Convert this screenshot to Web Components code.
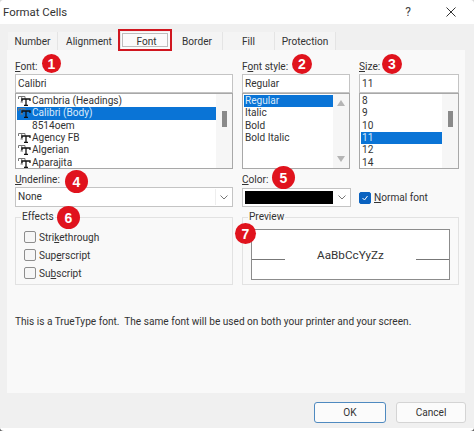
<!DOCTYPE html>
<html>
<head>
<meta charset="utf-8">
<title>Format Cells</title>
<style>
html { background: linear-gradient(#d8d8d8 50%, #666 50%); }
html, body { height: 431px; margin: 0; overflow: hidden; padding: 0; }
body { color: #333; font-family: Roboto, "Open Sans", sans-serif; font-size: 10.1px; }
</style>
</head>
<body>
<fc-dialog heading="Format Cells">
    <fc-tabs slot="tabs" active="Font"></fc-tabs>

    <fc-field label="&lt;u&gt;F&lt;/u&gt;ont:" badge="1" badge-x="27" badge-y="4" badge-size="19">
        <fc-input value="Calibri"></fc-input>
        <fc-list rows="Cambria (Headings),Calibri (Body),8514oem,Agency FB,Algerian,Aparajita" selected="1" icons="0,1,3,4,5" bar="thumb"></fc-list>
    </fc-field>
    <fc-field label="F&lt;u&gt;o&lt;/u&gt;nt style:" badge="2" badge-x="50" badge-y="4" badge-size="20">
        <fc-input value="Regular"></fc-input>
        <fc-list rows="Regular,Italic,Bold,Bold Italic" selected="0" bar="arrows"></fc-list>
    </fc-field>
    <fc-field label="&lt;u&gt;S&lt;/u&gt;ize:" badge="3" badge-x="23" badge-y="4" badge-size="20">
        <fc-input value="11"></fc-input>
        <fc-list rows="8,9,10,11,12,14" selected="3" bar="thumb"></fc-list>
    </fc-field>

    <fc-field class="low" label="&lt;u&gt;U&lt;/u&gt;nderline:" badge="4" badge-x="50" badge-y="1" badge-size="23">
        <fc-combo value="None"></fc-combo>
    </fc-field>
    <fc-field class="low wide" label="&lt;u&gt;C&lt;/u&gt;olor:" badge="5" badge-x="30" badge-y="-3" badge-size="23">
        <div style="align-items:center;display:flex;margin-top:1px">
            <fc-combo swatch style="height:19px;width:109px"></fc-combo>
            <fc-check checked style="margin-left:8px" label="&lt;u&gt;N&lt;/u&gt;ormal font"></fc-check>
        </div>
    </fc-field>

    <fc-group heading="Effects" badge="6">
        <fc-check label="Stri&lt;u&gt;k&lt;/u&gt;ethrough"></fc-check>
        <fc-check label="Sup&lt;u&gt;e&lt;/u&gt;rscript"></fc-check>
        <fc-check label="Su&lt;u&gt;b&lt;/u&gt;script"></fc-check>
    </fc-group>
    <fc-group class="wide" heading="Preview">
        <fc-preview sample="AaBbCcYyZz"></fc-preview>
    </fc-group>

    <p slot="note">This is a TrueType font.&nbsp; The same font will be used on both your printer and your screen.</p>

    <fc-button slot="footer" primary style="width:72px">OK</fc-button>
    <fc-button slot="footer" style="width:70px">Cancel</fc-button>
</fc-dialog>

<script>
const badgeCss = `
.badge {
    align-items: center;
    background: #e0131d;
    border-radius: 50%;
    color: #fff;
    display: flex;
    font: bold 14px "Liberation Sans", sans-serif;
    justify-content: center;
    position: absolute;
}`;

class FcDialog extends HTMLElement {
    connectedCallback() {
        this.attachShadow({mode: 'open'});
        this.shadowRoot.innerHTML = `<style>
:host { background: #f0f0f0; border-bottom: 3px solid #fff; border-radius: 4px; box-sizing: border-box; display: flex; flex-direction: column; height: 431px; overflow: hidden; width: 474px; }
.title { align-items: center; background: #fff; display: flex; flex: none; font-size: 11.4px; height: 24px; padding-left: 3px; }
.title span { flex: 1; }
.title svg { display: block; }
.title .help { color: #444; flex: none; font-size: 12px; margin-right: 35px; }
.x { margin-right: 18px; }
.tabs { flex: none; height: 26px; padding-left: 8px; position: relative; z-index: 1; }
.panel { background: #f9f9f9; box-sizing: border-box; display: flex; flex: none; flex-direction: column; height: 343px; margin: 0 9px 0 7px; padding: 0 0 0 8px; }
.grid { column-gap: 9px; display: grid; grid-template-columns: 218px 108px 100px; }
::slotted(fc-group) { margin-top: 10px; }
::slotted(.wide) { grid-column: span 2; }
::slotted(p) { line-height: 14px; margin: 30px 0 0; }
.foot { column-gap: 10px; display: flex; flex: 1; justify-content: flex-end; padding: 9px 8px 0 0; }
</style>
<div class="title"><span>${this.getAttribute('heading')}</span>
<span class="help">?</span>
<svg class="x" width="10" height="10" viewBox="0 0 10 10"><path d="M.5.5l9 9M9.500.5l-9 9" stroke="#333" fill="none"/></svg></div>
<div class="tabs"><slot name="tabs"></slot></div>
<div class="panel"><div class="grid"><slot></slot></div><slot name="note"></slot></div>
<div class="foot"><slot name="footer"></slot></div>`;
    }
}

class FcTabs extends HTMLElement {
    connectedCallback() {
        this.attachShadow({mode: 'open'});
        const active = this.getAttribute('active');
        const tabs = [['Number', 50], ['Alignment', 63], ['Font', 51], ['Border', 51], ['Fill', 52], ['Protection', 61]];
        const html = tabs.map(([name, width]) =>
            `<div class="tab ${name === active ? 'on' : ''}" style="width:${width}px">${name}</div>`).join('');
        this.shadowRoot.innerHTML = `<style>
:host { display: block; height: 26px; }
.row { align-items: flex-end; display: flex; height: 26px; }
.tab { align-items: center; background: #f4f4f4; border-right: 1px solid #e4e4e4; box-sizing: border-box; display: flex; height: 18px; justify-content: center; position: relative; }
.tab.on { background: #fbfbfb; border: 0; }
/* red marker round the active tab, with the tab's own grey edge inside it */
.tab.on::after { border: 2px solid #d0161f; box-sizing: border-box; content: ""; inset: -3px 0 -1px -3px; outline: 1px solid #bdbdbd; outline-offset: -5px; position: absolute; }
</style><div class="row">${html}</div>`;
    }
}

class FcField extends HTMLElement {
    connectedCallback() {
        this.attachShadow({mode: 'open'});
        const size = this.getAttribute('badge-size');
        this.shadowRoot.innerHTML = `<style>
:host { display: block; position: relative; }
:host(.low) .label { height: 18px; }
.label { align-items: flex-end; box-sizing: border-box; display: flex; height: 24px; line-height: 14px; }
${badgeCss}
.badge { height: ${size}px; left: ${this.getAttribute('badge-x')}px; top: ${this.getAttribute('badge-y')}px; width: ${size}px; }
</style><div class="label"><span>${this.getAttribute('label')}</span></div>
<slot></slot><div class="badge">${this.getAttribute('badge')}</div>`;
    }
}

class FcInput extends HTMLElement {
    connectedCallback() {
        this.attachShadow({mode: 'open'});
        this.shadowRoot.innerHTML = `<style>
:host { background: #fff; border: 1px solid #c4c4c4; box-sizing: border-box; display: block; height: 19px; line-height: 17px; padding-left: 2px; }
</style>${this.getAttribute('value')}`;
    }
}

class FcList extends HTMLElement {
    connectedCallback() {
        this.attachShadow({mode: 'open'});
        const selected = +this.getAttribute('selected');
        const hasIcons = this.hasAttribute('icons');
        const icons = hasIcons ? this.getAttribute('icons').split(',').map(Number) : [];
        const glyph = `<svg class="tt" width="13" height="10" viewBox="0 0 13 10"><path d="M.5 3V.5h6.500V3M3.700.5V6M2.500 6h2.500" stroke="#777" fill="none"/><path d="M4 5V3h8v2M8 3v6.500M6 9.500h4" stroke="#111" stroke-width="1.300" fill="none"/></svg>`;
        const rows = this.getAttribute('rows').split(',').map((text, i) =>
            `<div class="row ${i === selected ? 'sel' : ''}">${hasIcons ? `<span class="ic">${icons.includes(i) ? glyph : ''}</span>` : ''}${text}</div>`).join('');
        const thumb = `<div class="bar"><i class="thumb"></i></div>`;
        const arrows = `<div class="bar arrows"><svg width="8" height="6" viewBox="0 0 8 6"><path d="M0 6l4-6 4 6z" fill="#b5b5b5"/></svg><svg width="8" height="6" viewBox="0 0 8 6"><path d="M0 0l4 6 4-6z" fill="#b5b5b5"/></svg></div>`;
        this.shadowRoot.innerHTML = `<style>
:host { background: #fff; border: 1px solid #a8a8a8; box-sizing: border-box; display: flex; height: 76px; overflow: hidden; }
.rows { flex: 1; min-width: 0; padding: 1px 0 1px 1px; }
.row { align-items: center; display: flex; height: 12.300px; line-height: 12px; padding-left: 1px; white-space: nowrap; }
.row.sel { background: #0a74d6; color: #d9eafa; }
.ic { display: block; flex: none; width: 14px; }
.tt { display: block; }
.bar { align-items: center; background: #f6f6f6; display: flex; flex: none; flex-direction: column; width: 16px; }
.thumb { background: #8a8a8a; display: block; height: 16px; margin-top: 17px; width: 5px; }
.arrows { box-sizing: border-box; justify-content: space-between; padding: 6px 0; }
</style><div class="rows">${rows}</div>${this.getAttribute('bar') === 'arrows' ? arrows : thumb}`;
    }
}

class FcCombo extends HTMLElement {
    connectedCallback() {
        this.attachShadow({mode: 'open'});
        const inner = this.hasAttribute('swatch') ? '<div class="swatch"></div>' : `<div class="val">${this.getAttribute('value')}</div>`;
        this.shadowRoot.innerHTML = `<style>
:host { background: #fff; border: 1px solid #c4c4c4; box-sizing: border-box; display: flex; height: 20px; }
.val { flex: 1; line-height: 18px; padding-left: 2px; }
.swatch { background: #000; flex: 1; margin: 2px 0 2px 2px; }
.arrow { align-items: center; border-left: 1px solid #eee; display: flex; flex: none; justify-content: center; margin: 1px 0; width: 16px; }
.swatch + .arrow { border-left: 0; width: 17px; }
</style>${inner}<div class="arrow"><svg width="8" height="5" viewBox="0 0 8 5"><path d="M.5.5l3.500 3.500 3.500-3.500" stroke="#777" fill="none"/></svg></div>`;
    }
}

class FcCheck extends HTMLElement {
    connectedCallback() {
        this.attachShadow({mode: 'open'});
        const on = this.hasAttribute('checked');
        this.shadowRoot.innerHTML = `<style>
:host { align-items: center; column-gap: 3px; display: flex; height: 18px; }
.box { background: #f6f6f6; border: 1px solid #8d8d8d; border-radius: 2px; box-sizing: border-box; display: block; flex: none; height: 12px; width: 12px; }
.box.on { background: #0a62c0; border-color: #0a62c0; }
</style><span class="box ${on ? 'on' : ''}">${on ? '<svg width="10" height="10" viewBox="0 0 10 10" style="display:block"><path d="M2.500 5l2 2 3-4" stroke="#fff" fill="none"/></svg>' : ''}</span><span>${this.getAttribute('label')}</span>`;
    }
}

class FcGroup extends HTMLElement {
    connectedCallback() {
        this.attachShadow({mode: 'open'});
        const badge = this.getAttribute('badge');
        this.shadowRoot.innerHTML = `<style>
:host { border: 1px solid #e2e2e2; box-sizing: border-box; display: block; height: 68px; position: relative; }
.legend { background: #f9f9f9; left: 5px; line-height: 12px; padding: 0 1px; position: absolute; top: -7px; }
.body { padding: 10px 8px 0; }
${badgeCss}
.badge { height: 23px; left: 41px; top: -12px; width: 23px; }
</style><div class="legend">${this.getAttribute('heading')}</div><div class="body"><slot></slot></div>${badge ? `<div class="badge">${badge}</div>` : ''}`;
    }
}

class FcPreview extends HTMLElement {
    connectedCallback() {
        this.attachShadow({mode: 'open'});
        this.shadowRoot.innerHTML = `<style>
:host { align-items: center; background: #fff; border: 1px solid #8c8c8c; box-sizing: border-box; display: flex; height: 51px; margin-top: 1px; position: relative; width: 199px; }
i { background: #777; display: block; flex: none; height: 1px; margin-top: 9px; width: 33px; }
span { flex: 1; font-size: 11.7px; text-align: center; }
${badgeCss}
.badge { height: 21px; left: -17px; top: -7px; width: 21px; }
</style><i></i><span>${this.getAttribute('sample')}</span><i></i><div class="badge">7</div>`;
    }
}

class FcButton extends HTMLElement {
    connectedCallback() {
        this.attachShadow({mode: 'open'});
        this.shadowRoot.innerHTML = `<style>
:host { align-items: center; background: #fbfbfb; border: 1px solid ${this.hasAttribute('primary') ? '#4f8ac0' : '#d4d4d4'}; border-radius: 3px; box-sizing: border-box; display: flex; height: 21px; justify-content: center; }
</style><slot></slot>`;
    }
}

customElements.define('fc-dialog', FcDialog);
customElements.define('fc-tabs', FcTabs);
customElements.define('fc-field', FcField);
customElements.define('fc-input', FcInput);
customElements.define('fc-list', FcList);
customElements.define('fc-combo', FcCombo);
customElements.define('fc-check', FcCheck);
customElements.define('fc-group', FcGroup);
customElements.define('fc-preview', FcPreview);
customElements.define('fc-button', FcButton);
</script>
</body>
</html>
